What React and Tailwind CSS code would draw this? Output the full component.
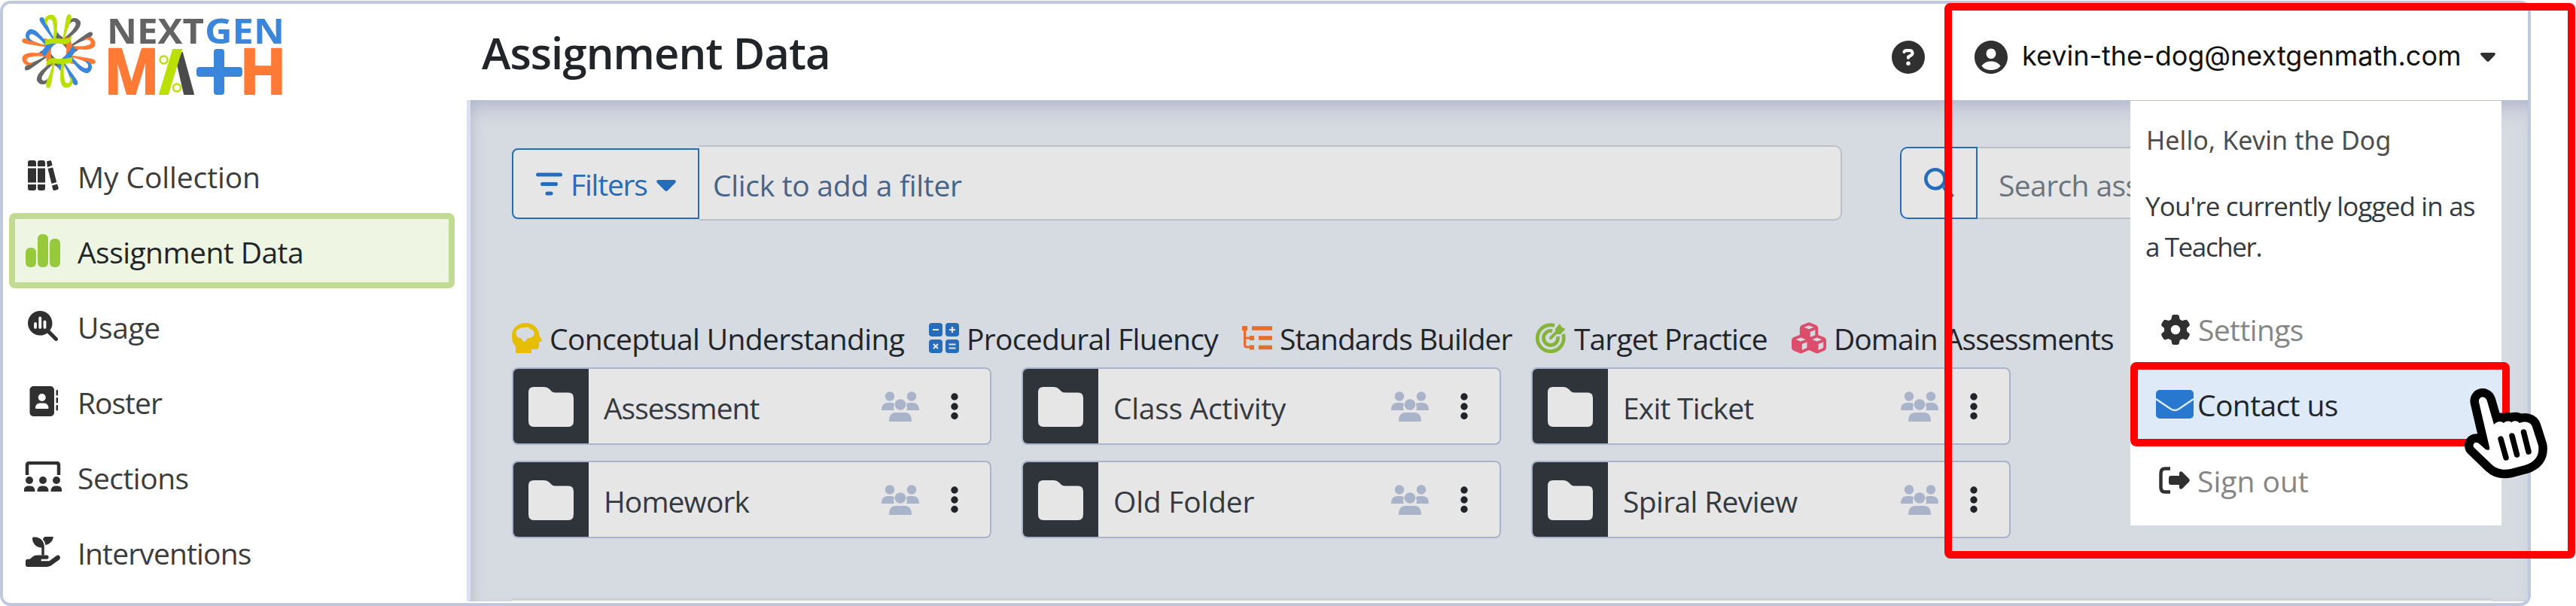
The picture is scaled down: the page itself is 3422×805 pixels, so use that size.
import React from "react";
import {
  FaAddressBook,
  FaCircleQuestion,
  FaCubes,
  FaGear,
  FaHandHolding,
  FaMagnifyingGlassChart,
  FaSeedling,
} from "react-icons/fa6";

// --- icons ---

const BooksIcon = () => (
  <svg viewBox="0 0 41 40" className="w-[41px] h-[40px]" fill="currentColor">
    <path d="M0 8V3a3 3 0 0 1 3-3h5a3 3 0 0 1 3 3v5zM0 10.500h11v19H0zM0 32h11v5a3 3 0 0 1-3 3H3a3 3 0 0 1-3-3z" />
    <path d="M13 8V3a3 3 0 0 1 3-3h4a3 3 0 0 1 3 3v5zM13 10.500h10v19H13zM13 32h10v5a3 3 0 0 1-3 3h-4a3 3 0 0 1-3-3z" />
    <path d="M25 1.500 29 0.300q2-.6 2.500 1.400l1 5L26 9zM26.500 11l6.700-1.500 5 19.500-6.700 2zM32 33.500l7-2 1.700 5q.3 2-1.500 2.500l-3.500 1q-2 .3-2.500-1.500z" />
  </svg>
);

const BarsIcon = () => (
  <svg viewBox="0 0 46 44" className="w-[46px] h-[44px]" fill="currentColor">
    <rect x="0" y="18" width="14" height="26" rx="6" />
    <rect x="16" y="0" width="14" height="44" rx="6" />
    <rect x="32" y="6" width="14" height="38" rx="6" />
  </svg>
);

const SectionsIcon = () => (
  <svg viewBox="0 0 50 40" className="w-[50px] h-[40px]" fill="currentColor">
    <path d="M4 18V5q0-3 3-3h36q3 0 3 3v13" fill="none" stroke="currentColor" strokeWidth="4.500" />
    {[7, 25, 43].map((x) => (
      <g key={x}>
        <circle cx={x} cy="25" r="5" />
        <path d={`M${x - 7.500} 40q0-7.500 6-7.500h3q6 0 6 7.500z`} />
      </g>
    ))}
  </svg>
);

const InterventionsIcon = () => (
  <svg viewBox="0 0 46 40" className="w-[46px] h-[40px]">
    <svg x="8" y="-3" width="30" height="28" viewBox="0 0 30 28">
      <FaSeedling className="w-[30px] h-[28px]" />
    </svg>
    <svg x="0" y="-1" width="46" height="41" viewBox="0 0 46 41">
      <FaHandHolding className="w-[46px] h-[41px]" />
    </svg>
  </svg>
);

const FilterIcon = () => (
  <svg viewBox="0 0 35 31" className="w-[35px] h-[31px]" stroke="currentColor" strokeWidth="5" strokeLinecap="round">
    <path d="M2.500 3h30M8.500 15.500h18M15 28h5" />
  </svg>
);

const SearchIcon = () => (
  <svg viewBox="3 3 17.500 17.500" className="w-[40px] h-[40px]" fill="currentColor">
    <path d="M15.500 14h-.79l-.28-.27C15.410 12.590 16 11.110 16 9.500 16 5.910 13.090 3 9.500 3S3 5.910 3 9.500 5.910 16 9.500 16c1.610 0 3.090-.59 4.230-1.570l.27.28v.79l5 4.990L20.490 19l-4.990-5zm-6 0C7.010 14 5 11.990 5 9.500S7.010 5 9.500 5 14 7.010 14 9.500 11.990 14 9.500 14z" />
  </svg>
);

const UserIcon = () => (
  <svg viewBox="2 2 20 20" className="w-[44px] h-[44px]" fill="currentColor">
    <path d="M12 2C6.480 2 2 6.480 2 12s4.480 10 10 10 10-4.480 10-10S17.520 2 12 2zm0 4.800c1.660 0 2.900 1.300 2.900 3S13.660 12.900 12 12.900s-2.900-1.400-2.900-3.100S10.340 6.800 12 6.800zm0 12.900c-2.500 0-4.500-.8-5.700-2.500 1.500-2 3.400-2.700 5.700-2.700s4.200.7 5.700 2.700c-1.200 1.700-3.200 2.500-5.700 2.500z" />
  </svg>
);

const Caret = ({ className }) => (
  <svg viewBox="0 0 26 15" className={className} preserveAspectRatio="none" fill="currentColor">
    <path d="M2 0h22q3 1 1 4L15 14q-2 2-4 0L1 4q-2-3 1-4z" />
  </svg>
);

const HeadIcon = () => (
  <svg viewBox="0 0 40 40" className="w-[40px] h-[40px]" fill="currentColor" fillRule="evenodd">
    <path d="M18 0C30 0 36 8 36.500 17l3.200 5.500q.8 2-1.200 2.500H36v6q0 4-4 4h-6v5H5V31C1 27 0 22 0 17 0 7 8 0 18 0zM12 7c-4 0-7 3.500-6.500 7.500C6 19 9 20 12 20l3.500 5 3-1 2.500-4c5 0 9-2 8.500-6.500C29.500 9 26 9 24 8c-2-3-6-3-7.500-1.500C15 5.500 13 6 12 7z" />
  </svg>
);

const CalcIcon = () => (
  <svg viewBox="0 0 40 40" className="w-[40px] h-[40px]">
    {[[0, 0], [22, 0], [0, 22], [22, 22]].map(([x, y]) => (
      <rect key={`${x}-${y}`} x={x} y={y} width="18" height="18" rx="4" fill="currentColor" />
    ))}
    <path
      d="M5 9h8M27 9h8M31 5v8M6 28l6 6M12 28l-6 6M26.500 28.500h9M26.500 33.500h9"
      stroke="#e6e6e6"
      strokeWidth="2.200"
    />
  </svg>
);

const TreeIcon = () => (
  <svg viewBox="0 0 40 32" className="w-[40px] h-[32px]" stroke="currentColor">
    <path d="M3.500 3v22q0 3 3 3H14M3.500 16H14" fill="none" strokeWidth="3" />
    <path d="M0 3h7M10 16h6M10 28.500h6" strokeWidth="6" />
    <path d="M13 3h27M22 16h18M22 28.500h18" strokeWidth="5.500" />
  </svg>
);

const TargetIcon = () => (
  <svg viewBox="0 0 40 40" className="w-[40px] h-[40px]" fill="none" stroke="currentColor">
    <path d="M25 3.500A17.500 17.500 0 1 0 36.500 15" strokeWidth="4.800" />
    <path d="M22 10.700A9.500 9.500 0 1 0 29.300 18" strokeWidth="4.800" />
    <path d="M20 20 31 9" strokeWidth="4" strokeLinecap="round" />
    <path d="M26 8 32 1l2.500 4.500L39.500 8 33 15h-6z" fill="currentColor" stroke="none" />
  </svg>
);

const GroupIcon = () => (
  <svg viewBox="0 0 50 40" className="w-[50px] h-[40px]" fill="#a9b3ca">
    <circle cx="11" cy="6.500" r="6.200" />
    <circle cx="40" cy="6.500" r="6.200" />
    <path d="M0 25q0-10 8-10h5q4 0 4 3-2 4 0 7zM50 25q0-10-8-10h-5q-4 0-4 3 2 4 0 7z" />
    <circle cx="25" cy="17.500" r="7.300" />
    <path d="M10 40q0-12 9-12h12q9 0 9 12z" />
  </svg>
);

const DotsIcon = () => (
  <svg viewBox="0 0 10 36" className="w-[10px] h-[36px]" fill="#212529">
    <circle cx="5" cy="5" r="4.700" />
    <circle cx="5" cy="18" r="4.700" />
    <circle cx="5" cy="30.500" r="4.700" />
  </svg>
);

const FolderIcon = () => (
  <svg viewBox="0 0 60 54" className="w-[60px] h-[54px]" fill="#e6e6e6">
    <path d="M0 8q0-7 7-7h14q4 0 7 3l3 3q2 1.500 5 1.500h17q7 0 7 7V46q0 8-7 8H7q-7 0-7-8z" />
  </svg>
);

const EnvelopeIcon = () => (
  <svg viewBox="0 0 50 38" className="w-[50px] h-[38px]">
    <rect width="50" height="38" rx="5" fill="#2878d0" />
    <path d="M0 12 20 25.500q5 3 10 0L50 12" fill="none" stroke="#deeaf7" strokeWidth="2.500" />
  </svg>
);

const SignOutIcon = () => (
  <svg viewBox="0 0 41 36" className="w-[41px] h-[36px]" fill="currentColor">
    <path d="M15 2.500H8Q2.500 2.500 2.500 9v18q0 6.500 5.500 6.500h7" fill="none" stroke="currentColor" strokeWidth="4.500" />
    <path d="M16 12h11V8q1-3 4-1l9 9q1.500 2 0 4l-9 9q-3 2-4-1v-4H16q-3 0-3-3v-6q0-3 3-3z" />
  </svg>
);

const HandCursor = () => (
  <svg viewBox="0 0 112 120" className="absolute left-[3273px] top-[516px] w-[112px] h-[120px]">
    <path
      d="M20 18C19 10 29 9 31 17L40 48C44 43 50 43 53 46 56 43 60 43 63 45 67 42 72 43 74 46 82 43 89 45 91 51L99 76C101 90 94 98 81 102L62 107C52 109 43 107 37 101L13 78C11 73 16 69 21 74L29 81C33 83 35 81 34 78Z"
      fill="#fff"
      stroke="#000"
      strokeWidth="23"
      strokeLinejoin="round"
    />
    <path
      d="M20 18C19 10 29 9 31 17L40 48C44 43 50 43 53 46 56 43 60 43 63 45 67 42 72 43 74 46 82 43 89 45 91 51L99 76C101 90 94 98 81 102L62 107C52 109 43 107 37 101L13 78C11 73 16 69 21 74L29 81C33 83 35 81 34 78Z"
      fill="#fff"
    />
    <path d="M49 67 56 92M64 63 70.500 88M79.500 58 86 84" stroke="#000" strokeWidth="7.500" strokeLinecap="round" />
  </svg>
);

// --- logo ---

const rays = [
  ["#666666", 45],
  ["#ff7a35", 90],
  ["#3a86db", 135],
  ["#666666", 225],
  ["#ff7a35", 270],
  ["#3a86db", 315],
  ["#b9e000", 0],
  ["#b9e000", 180],
];

const Logo = () => (
  <svg viewBox="0 0 350 110" className="w-[350px] h-[110px] overflow-visible">
    {rays.map(([color, angle]) => (
      <g key={angle} transform={`translate(48 52) rotate(${angle})`} fill={color}>
        <path d="M-17 21Q-17 10-8 9 4 12 18 8 19 15 15 16 4 18-8 16-14 17-17 21z" />
        <path d="M-7.500 14-5 14Q-7.500 30-10 44-12 51-16 48-18.500 45-14 35-9 24-7.500 14z" />
        <path d="M4 14 8 14Q5 28 8 39 10 44 13.500 42 16.500 39 15 33 20 39 18 44 14 50 7 48 2.500 45 2 36 2 24 4 14z" />
      </g>
    ))}
    <g fontFamily="'Open Sans', 'Noto Sans', sans-serif" fontWeight="700">
      <text x="112" y="42" fontSize="47" fill="#636363" textLength="129" lengthAdjust="spacingAndGlyphs">NEXT</text>
      <text x="242" y="42" fontSize="47" fill="#3a86db" textLength="106" lengthAdjust="spacingAndGlyphs">GEN</text>
      <g fontSize="84" fill="#ff7a35" stroke="#ff7a35" strokeWidth="2" strokeLinejoin="round">
        <text x="108" y="109" textLength="74" lengthAdjust="spacingAndGlyphs">M</text>
        <text x="288" y="109" textLength="63" lengthAdjust="spacingAndGlyphs">H</text>
      </g>
    </g>
    <path d="M212 54 227 109H215L206 70Z" fill="#4a4a4a" stroke="#4a4a4a" strokeWidth="2" strokeLinejoin="round" />
    <path d="M200 50H211L193 109H182Z" fill="#b9e000" stroke="#b9e000" strokeWidth="2" strokeLinejoin="round" />
    <g fill="none" stroke="#b9e000" strokeWidth="2.500">
      <circle cx="187.500" cy="63.500" r="5" />
      <circle cx="205" cy="100.500" r="5" />
    </g>
    <rect x="254" y="49" width="14" height="61" rx="4" fill="#3a86db" />
    <rect x="231" y="73" width="61" height="13" rx="4" fill="#3a86db" />
  </svg>
);

// --- layout ---

const navItems = [
  { label: "My Collection", icon: <BooksIcon />, tracking: "tracking-[-0.1px]" },
  { label: "Assignment Data", icon: <BarsIcon />, tracking: "tracking-[-0.55px]", active: true },
  {
    label: "Usage",
    icon: <FaMagnifyingGlassChart className="w-[40px] h-[40px]" />,
    tracking: "tracking-[-0.4px]",
  },
  { label: "Roster", icon: <FaAddressBook className="w-[40px] h-[40px]" />, tracking: "tracking-[-1px]" },
  { label: "Sections", icon: <SectionsIcon />, tracking: "tracking-[-0.5px]" },
  { label: "Interventions", icon: <InterventionsIcon />, tracking: "tracking-[-0.85px]" },
];

const Sidebar = () => (
  <aside className="w-[616px] shrink-0 bg-white">
    <div className="h-[178px] pl-[26px] pt-[11px]">
      <Logo />
    </div>
    <nav className="pl-[8px]">
      {navItems.map(({ label, icon, tracking, active }) => (
        <div
          key={label}
          className={`flex items-center w-[592px] h-[100px] rounded-[8px] border-8 pl-[7px] ${
            active ? "border-[#c1dc92] bg-[#eef5e3] text-[#212529]" : "border-transparent text-[#3c3c3c]"
          }`}
        >
          <span className={`flex justify-center w-[60px] ${active ? "text-[#97c93d]" : "text-[#303030]"}`}>
            {icon}
          </span>
          <span className={`ml-[16px] pt-[2px] text-[39px] leading-none whitespace-nowrap ${tracking}`}>{label}</span>
        </div>
      ))}
    </nav>
  </aside>
);

const Header = () => (
  <header className="flex items-center h-[128px] pl-[20px] pr-[43px] bg-white">
    <h1 className="pt-[2px] text-[58px] font-semibold leading-none tracking-[-0.9px] text-[#212529] whitespace-nowrap">
      Assignment Data
    </h1>
    <div className="flex items-center ml-auto mt-[14px] text-[#303030]">
      <FaCircleQuestion className="w-[44px] h-[44px]" />
      <div className="flex items-center ml-[66px]">
        <UserIcon />
        <span className="w-[581px] ml-[19px] mr-px pb-[4px] font-['Inter',sans-serif] text-[36px] leading-none text-[#111111] whitespace-nowrap">
          kevin-the-dog@nextgenmath.com
        </span>
        <Caret className="w-[20px] h-[12px] ml-[27px]" />
      </div>
    </div>
  </header>
);

const Toolbar = () => (
  <div className="flex items-center h-[100px] text-[39px] leading-none whitespace-nowrap">
    <button className="flex items-center w-[249px] h-[94px] mt-[2px] pl-[30px] rounded-l-[8px] border-2 border-[#256dba] bg-[#e6e6e6] text-[#256dba]">
      <FilterIcon />
      <span className="w-[103px] ml-[11px] text-left tracking-[-1.2px]">Filters</span>
      <Caret className="w-[26px] h-[15px] ml-[11px] mt-[4px]" />
    </button>
    <div className="flex items-center w-[1518px] h-[100px] pl-[18px] pt-[5px] rounded-r-[10px] border-2 border-l-0 border-[#bcc0c4] bg-[#e6e6e6] text-[#486489] tracking-[-0.3px]">
      Click to add a filter
    </div>
    <button className="flex items-center justify-center w-[103px] h-[96px] ml-[77px] rounded-l-[10px] border-2 border-[#256dba] bg-[#e6e6e6] text-[#256dba]">
      <SearchIcon />
    </button>
    <div className="flex items-center w-[640px] h-[96px] pl-[28px] pt-[5px] border-2 border-l-0 border-[#bcc0c4] bg-[#e6e6e6] text-[#6c757d] tracking-[-0.6px]">
      Search assignments
    </div>
  </div>
);

const Legend = () => (
  <div className="flex items-center h-[40px] mt-[136px] text-[39px] leading-none text-[#212529] whitespace-nowrap">
    <div className="flex items-center w-[554px] gap-[10px] tracking-[-0.65px]">
      <span className="text-[#e6be00]"><HeadIcon /></span>
      Conceptual Understanding
    </div>
    <div className="flex items-center w-[416px] gap-[10px] tracking-[-0.7px]">
      <span className="text-[#256dba]"><CalcIcon /></span>
      Procedural Fluency
    </div>
    <div className="flex items-center w-[390px] gap-[10px] tracking-[-1px]">
      <span className="text-[#e86c2c]"><TreeIcon /></span>
      Standards Builder
    </div>
    <div className="flex items-center w-[340px] gap-[11px] tracking-[-0.9px]">
      <span className="text-[#86b33a]"><TargetIcon /></span>
      Target Practice
    </div>
    <div className="flex items-center gap-[10px] tracking-[-0.95px]">
      <FaCubes className="w-[46px] h-[42px] text-[#dc4d6c]" />
      Domain Assessments
    </div>
  </div>
);

const folders = [
  { name: "Assessment", tracking: "tracking-[-1.05px]" },
  { name: "Class Activity", tracking: "tracking-[-0.3px]" },
  { name: "Exit Ticket", tracking: "tracking-[-0.8px]" },
  { name: "Homework", tracking: "tracking-[-0.9px]" },
  { name: "Old Folder", tracking: "tracking-[-0.2px]" },
  { name: "Spiral Review", tracking: "tracking-[-0.65px]" },
];

const FolderCard = ({ name, tracking }) => (
  <div className="flex items-center h-[103px] rounded-[8px] border-2 border-[#a9b3ca] bg-[#e6e6e6] overflow-hidden">
    <div className="flex items-center justify-center w-[100px] h-full bg-[#2f343b]">
      <FolderIcon />
    </div>
    <span className={`ml-[20px] pt-[3px] text-[39px] leading-none text-[#343a40] whitespace-nowrap ${tracking}`}>
      {name}
    </span>
    <div className="flex items-center gap-[42px] ml-auto mr-[42px]">
      <GroupIcon />
      <DotsIcon />
    </div>
  </div>
);

const UserMenu = () => (
  <div className="absolute left-[2830px] top-[134px] w-[493px] h-[564px] bg-white">
    <p className="pt-[34px] pl-[21px] text-[34px] leading-[36px] tracking-[0.1px] text-[#4d4d4d] whitespace-nowrap font-['Noto_Sans',sans-serif]">
      Hello, Kevin the Dog
    </p>
    <p className="mt-[43px] pl-[20px] text-[35px] leading-[54px] tracking-[-0.85px] text-[#343a40] whitespace-nowrap">
      You're currently logged in as
      <br />
      <span className="tracking-[-1.4px]">a Teacher.</span>
    </p>
    <div className="flex items-center h-[100px] mt-[34px] pl-[40px] pb-[3px] text-[39px] leading-none tracking-[-0.6px] text-[#868686]">
      <FaGear className="w-[40px] h-[40px] text-[#303030]" />
      <span className="ml-[10px]">Settings</span>
    </div>
    <div className="flex items-center w-[504px] h-[112px] -mt-[8px] pl-[24px] border-10 border-[#ff0000] rounded-[8px] bg-[#deeaf7] text-[39px] leading-none tracking-[-0.6px] text-[#212529]">
      <EnvelopeIcon />
      <span className="ml-[5px]">Contact us</span>
    </div>
    <div className="flex items-center h-[90px] pl-[38px] text-[39px] leading-none text-[#868686]">
      <span className="text-[#303030]"><SignOutIcon /></span>
      <span className="ml-[10px]">Sign out</span>
    </div>
  </div>
);

const App = () => (
  <div className="relative w-[3422px] h-[805px] pt-px bg-white overflow-hidden font-['Open_Sans','Noto_Sans',sans-serif]">
    <div className="flex w-[3362px] h-[804px] border-4 border-[#c0c8e0] rounded-[14px] overflow-hidden">
      <Sidebar />
      <div className="flex-1">
        <Header />
        <main className="h-[666px] pt-[60px] pl-[55px] border-l-5 border-[#dbe0f0] bg-[#d6dae1] shadow-[inset_0_24px_30px_-18px_#aab0c8,inset_12px_0_16px_-10px_#bfc4cf]">
          <Toolbar />
          <Legend />
          <div className="grid grid-cols-[repeat(3,637px)] gap-x-[40px] gap-y-[21px] mt-[19px]">
            {folders.map((folder) => (
              <FolderCard key={folder.name} {...folder} />
            ))}
          </div>
          <div className="w-[2630px] h-[4px] mt-[80px] border-t-2 border-[#c9cdd0] bg-[#e6e6e6]" />
        </main>
      </div>
    </div>

    <UserMenu />
    <div className="absolute left-[2583px] top-[4px] w-[838px] h-[738px] border-10 border-[#ff0000] rounded-[8px]" />
    <HandCursor />
  </div>
);

export default App;
